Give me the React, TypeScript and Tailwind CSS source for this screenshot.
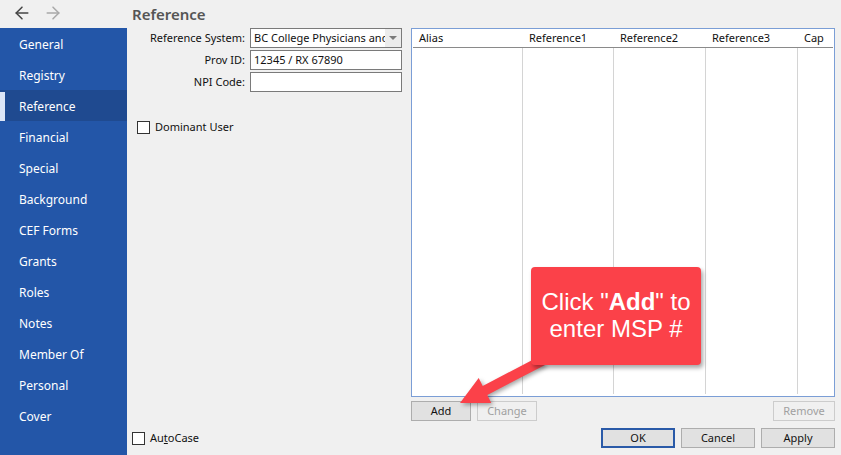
import { ArrowLeft, ArrowRight } from 'lucide-react'

const navItems = [
  'General',
  'Registry',
  'Reference',
  'Financial',
  'Special',
  'Background',
  'CEF Forms',
  'Grants',
  'Roles',
  'Notes',
  'Member Of',
  'Personal',
  'Cover',
]

const columns = [
  { label: 'Alias', width: 'w-[110px]' },
  { label: 'Reference1', width: 'w-[91px]' },
  { label: 'Reference2', width: 'w-[92px]' },
  { label: 'Reference3', width: 'w-[92px]' },
  { label: 'Cap', width: 'flex-1' },
]

function Checkbox({ label }: { label: React.ReactNode }) {
  return (
    <label className="flex items-center gap-[5px]">
      <span className="size-[13px] border border-[#333] bg-white" />
      <span>{label}</span>
    </label>
  )
}

function Field({ label, value, select }: { label: string; value?: string; select?: boolean }) {
  return (
    <div className="flex h-[20px] items-center">
      <span className="w-[118px] pr-[5px] text-right">{label}</span>
      <div className="flex h-full w-[152px] items-center overflow-hidden border border-[#7a7a7a] bg-white">
        <span className="flex-1 overflow-hidden whitespace-nowrap pl-[3px]">{value}</span>
        {select && (
          <span className="flex h-full w-[16px] shrink-0 items-center justify-center bg-[#ececec]">
            <span className="border-x-[4px] border-t-[4px] border-x-transparent border-t-[#7a7a7a]" />
          </span>
        )}
      </div>
    </div>
  )
}

function Btn({ children, disabled, primary }: { children: React.ReactNode; disabled?: boolean; primary?: boolean }) {
  const cls = primary
    ? 'border-2 border-[#2a5aa8] bg-[#e1e1e1] text-[#111]'
    : disabled
      ? 'border border-[#cccccc] bg-[#f0f0f0] text-[#a0a0a0]'
      : 'border border-[#adadad] bg-[#e1e1e1] text-[#111]'
  return <div className={`flex h-[20px] items-center justify-center ${cls}`}>{children}</div>
}

export default function App() {
  return (
    <div className="relative flex h-[455px] w-[841px] overflow-hidden bg-[#f0f0f0] font-['Noto_Sans',sans-serif] text-[11px] text-[#111]">
      {/* left nav */}
      <div className="flex w-[127px] flex-col">
        <div className="flex h-[28px] items-center gap-[11px] pl-[12px] pb-[2px]">
          <ArrowLeft size={20} strokeWidth={1.8} className="text-[#444]" />
          <ArrowRight size={20} strokeWidth={1.8} className="text-[#a8a8a8]" />
        </div>
        <nav className="flex-1 bg-[#2356a8] text-[12px] text-white">
          {navItems.map((item) =>
            item === 'Reference' ? (
              <div key={item} className="flex h-[31px] items-center bg-[#1f4a90] pt-[2px]">
                <span className="h-full w-[5px] bg-[#dce6f7]" />
                <span className="pl-[14px]">{item}</span>
              </div>
            ) : (
              <div key={item} className="flex h-[31px] items-center pl-[19px] pt-[2px]">
                {item}
              </div>
            ),
          )}
        </nav>
      </div>

      {/* main */}
      <div className="flex flex-1 flex-col pl-[5px] pr-[6px] pb-[7px]">
        <div className="flex h-[28px] items-center text-[15px] font-semibold text-[#555]">Reference</div>

        <div className="flex flex-1 gap-[9px]">
          <div className="flex w-[270px] flex-col">
            <div className="flex flex-col gap-[2px]">
              <Field label="Reference System:" value="BC College Physicians and Surgeons" select />
              <Field label="Prov ID:" value=" 12345 / RX 67890" />
              <Field label="NPI Code:" value="" />
            </div>
            <div className="mt-[27px] pl-[5px]">
              <Checkbox label="Dominant User" />
            </div>
          </div>

          <div className="flex flex-1 flex-col border border-[#7b9ed6] bg-white px-[1px]">
            <div className="flex h-[19px] items-center border-b border-[#8a8a8a]">
              {columns.map((c) => (
                <div key={c.label} className={`${c.width} pl-[6px]`}>
                  {c.label}
                </div>
              ))}
            </div>
            <div className="flex flex-1 pb-[2px]">
              {columns.map((c, i) => (
                <div
                  key={c.label}
                  className={`${c.width} ${i < columns.length - 1 ? 'border-r border-[#d4d4d4]' : ''}`}
                />
              ))}
            </div>
          </div>
        </div>

        <div className="mt-[4px] flex h-[20px]">
          <div className="w-[279px]" />
          <div className="w-[60px]">
            <Btn>Add</Btn>
          </div>
          <div className="ml-[6px] w-[60px]">
            <Btn disabled>Change</Btn>
          </div>
          <div className="flex-1" />
          <div className="w-[62px]">
            <Btn disabled>Remove</Btn>
          </div>
        </div>

        <div className="mt-[7px] flex h-[20px] items-center">
          <Checkbox
            label={
              <>
                Au<u>t</u>oCase
              </>
            }
          />
          <div className="flex-1" />
          <div className="flex gap-[6px]">
            <div className="w-[74px]">
              <Btn primary>OK</Btn>
            </div>
            <div className="w-[74px]">
              <Btn>Cancel</Btn>
            </div>
            <div className="w-[74px]">
              <Btn>Apply</Btn>
            </div>
          </div>
        </div>
      </div>

      {/* callout overlay */}
      <svg
        className="pointer-events-none absolute inset-0 drop-shadow-[2px_2px_2px_rgba(0,0,0,0.35)]"
        width={841}
        height={455}
        viewBox="0 0 841 455"
      >
        <polygon
          fill="#fb4149"
          points="460,403 491.3,402.9 487.3,394.9 545,365 540,356 482.7,385.9 478.7,377.9"
        />
      </svg>
      <div className="absolute left-[531px] top-[267px] flex h-[98px] w-[170px] flex-col items-center justify-center rounded-[4px] bg-[#fb4149] pb-[2px] font-['Liberation_Sans',Arial,sans-serif] text-[24px] leading-[27px] text-white shadow-[2px_3px_4px_rgba(0,0,0,0.35)]">
        <span>
          Click "<b>Add</b>" to
        </span>
        <span>enter MSP #</span>
      </div>
    </div>
  )
}
